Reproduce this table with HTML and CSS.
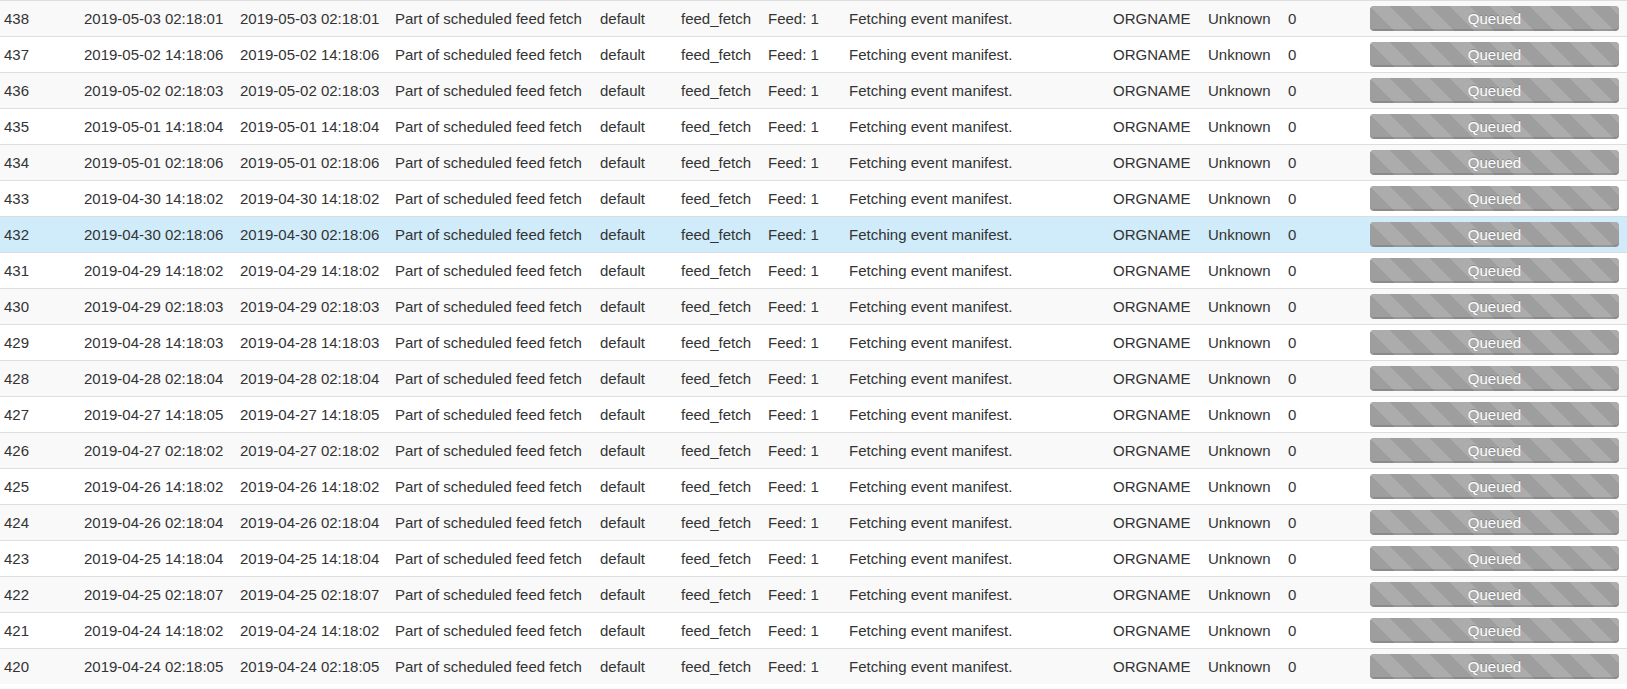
FILE: index.html
```html
<!DOCTYPE html>
<html>
<head>
<meta charset="utf-8">
<link rel="stylesheet" href="styles.css">
</head>
<body>
<table class="jobs">
<colgroup>
<col class="c-id"><col class="c-date"><col class="c-date2"><col class="c-desc"><col class="c-queue"><col class="c-type"><col class="c-input"><col class="c-msg"><col class="c-org"><col class="c-status"><col class="c-retry"><col class="c-progress">
</colgroup>
<tbody id="rows">
<tr><td>438</td><td>2019-05-03 02:18:01</td><td>2019-05-03 02:18:01</td><td>Part of scheduled feed fetch</td><td>default</td><td>feed_fetch</td><td>Feed: 1</td><td>Fetching event manifest.</td><td>ORGNAME</td><td>Unknown</td><td>0</td><td class="bar-cell"><div class="progress"><div class="bar">Queued</div></div></td></tr>
<tr><td>437</td><td>2019-05-02 14:18:06</td><td>2019-05-02 14:18:06</td><td>Part of scheduled feed fetch</td><td>default</td><td>feed_fetch</td><td>Feed: 1</td><td>Fetching event manifest.</td><td>ORGNAME</td><td>Unknown</td><td>0</td><td class="bar-cell"><div class="progress"><div class="bar">Queued</div></div></td></tr>
<tr><td>436</td><td>2019-05-02 02:18:03</td><td>2019-05-02 02:18:03</td><td>Part of scheduled feed fetch</td><td>default</td><td>feed_fetch</td><td>Feed: 1</td><td>Fetching event manifest.</td><td>ORGNAME</td><td>Unknown</td><td>0</td><td class="bar-cell"><div class="progress"><div class="bar">Queued</div></div></td></tr>
<tr><td>435</td><td>2019-05-01 14:18:04</td><td>2019-05-01 14:18:04</td><td>Part of scheduled feed fetch</td><td>default</td><td>feed_fetch</td><td>Feed: 1</td><td>Fetching event manifest.</td><td>ORGNAME</td><td>Unknown</td><td>0</td><td class="bar-cell"><div class="progress"><div class="bar">Queued</div></div></td></tr>
<tr><td>434</td><td>2019-05-01 02:18:06</td><td>2019-05-01 02:18:06</td><td>Part of scheduled feed fetch</td><td>default</td><td>feed_fetch</td><td>Feed: 1</td><td>Fetching event manifest.</td><td>ORGNAME</td><td>Unknown</td><td>0</td><td class="bar-cell"><div class="progress"><div class="bar">Queued</div></div></td></tr>
<tr><td>433</td><td>2019-04-30 14:18:02</td><td>2019-04-30 14:18:02</td><td>Part of scheduled feed fetch</td><td>default</td><td>feed_fetch</td><td>Feed: 1</td><td>Fetching event manifest.</td><td>ORGNAME</td><td>Unknown</td><td>0</td><td class="bar-cell"><div class="progress"><div class="bar">Queued</div></div></td></tr>
<tr class="selected"><td>432</td><td>2019-04-30 02:18:06</td><td>2019-04-30 02:18:06</td><td>Part of scheduled feed fetch</td><td>default</td><td>feed_fetch</td><td>Feed: 1</td><td>Fetching event manifest.</td><td>ORGNAME</td><td>Unknown</td><td>0</td><td class="bar-cell"><div class="progress"><div class="bar">Queued</div></div></td></tr>
<tr><td>431</td><td>2019-04-29 14:18:02</td><td>2019-04-29 14:18:02</td><td>Part of scheduled feed fetch</td><td>default</td><td>feed_fetch</td><td>Feed: 1</td><td>Fetching event manifest.</td><td>ORGNAME</td><td>Unknown</td><td>0</td><td class="bar-cell"><div class="progress"><div class="bar">Queued</div></div></td></tr>
<tr><td>430</td><td>2019-04-29 02:18:03</td><td>2019-04-29 02:18:03</td><td>Part of scheduled feed fetch</td><td>default</td><td>feed_fetch</td><td>Feed: 1</td><td>Fetching event manifest.</td><td>ORGNAME</td><td>Unknown</td><td>0</td><td class="bar-cell"><div class="progress"><div class="bar">Queued</div></div></td></tr>
<tr><td>429</td><td>2019-04-28 14:18:03</td><td>2019-04-28 14:18:03</td><td>Part of scheduled feed fetch</td><td>default</td><td>feed_fetch</td><td>Feed: 1</td><td>Fetching event manifest.</td><td>ORGNAME</td><td>Unknown</td><td>0</td><td class="bar-cell"><div class="progress"><div class="bar">Queued</div></div></td></tr>
<tr><td>428</td><td>2019-04-28 02:18:04</td><td>2019-04-28 02:18:04</td><td>Part of scheduled feed fetch</td><td>default</td><td>feed_fetch</td><td>Feed: 1</td><td>Fetching event manifest.</td><td>ORGNAME</td><td>Unknown</td><td>0</td><td class="bar-cell"><div class="progress"><div class="bar">Queued</div></div></td></tr>
<tr><td>427</td><td>2019-04-27 14:18:05</td><td>2019-04-27 14:18:05</td><td>Part of scheduled feed fetch</td><td>default</td><td>feed_fetch</td><td>Feed: 1</td><td>Fetching event manifest.</td><td>ORGNAME</td><td>Unknown</td><td>0</td><td class="bar-cell"><div class="progress"><div class="bar">Queued</div></div></td></tr>
<tr><td>426</td><td>2019-04-27 02:18:02</td><td>2019-04-27 02:18:02</td><td>Part of scheduled feed fetch</td><td>default</td><td>feed_fetch</td><td>Feed: 1</td><td>Fetching event manifest.</td><td>ORGNAME</td><td>Unknown</td><td>0</td><td class="bar-cell"><div class="progress"><div class="bar">Queued</div></div></td></tr>
<tr><td>425</td><td>2019-04-26 14:18:02</td><td>2019-04-26 14:18:02</td><td>Part of scheduled feed fetch</td><td>default</td><td>feed_fetch</td><td>Feed: 1</td><td>Fetching event manifest.</td><td>ORGNAME</td><td>Unknown</td><td>0</td><td class="bar-cell"><div class="progress"><div class="bar">Queued</div></div></td></tr>
<tr><td>424</td><td>2019-04-26 02:18:04</td><td>2019-04-26 02:18:04</td><td>Part of scheduled feed fetch</td><td>default</td><td>feed_fetch</td><td>Feed: 1</td><td>Fetching event manifest.</td><td>ORGNAME</td><td>Unknown</td><td>0</td><td class="bar-cell"><div class="progress"><div class="bar">Queued</div></div></td></tr>
<tr><td>423</td><td>2019-04-25 14:18:04</td><td>2019-04-25 14:18:04</td><td>Part of scheduled feed fetch</td><td>default</td><td>feed_fetch</td><td>Feed: 1</td><td>Fetching event manifest.</td><td>ORGNAME</td><td>Unknown</td><td>0</td><td class="bar-cell"><div class="progress"><div class="bar">Queued</div></div></td></tr>
<tr><td>422</td><td>2019-04-25 02:18:07</td><td>2019-04-25 02:18:07</td><td>Part of scheduled feed fetch</td><td>default</td><td>feed_fetch</td><td>Feed: 1</td><td>Fetching event manifest.</td><td>ORGNAME</td><td>Unknown</td><td>0</td><td class="bar-cell"><div class="progress"><div class="bar">Queued</div></div></td></tr>
<tr><td>421</td><td>2019-04-24 14:18:02</td><td>2019-04-24 14:18:02</td><td>Part of scheduled feed fetch</td><td>default</td><td>feed_fetch</td><td>Feed: 1</td><td>Fetching event manifest.</td><td>ORGNAME</td><td>Unknown</td><td>0</td><td class="bar-cell"><div class="progress"><div class="bar">Queued</div></div></td></tr>
<tr><td>420</td><td>2019-04-24 02:18:05</td><td>2019-04-24 02:18:05</td><td>Part of scheduled feed fetch</td><td>default</td><td>feed_fetch</td><td>Feed: 1</td><td>Fetching event manifest.</td><td>ORGNAME</td><td>Unknown</td><td>0</td><td class="bar-cell"><div class="progress"><div class="bar">Queued</div></div></td></tr>
</tbody>
</table>
</body>
</html>
```

FILE: styles.css
```css
html, body {
  margin: 0;
  padding: 0;
  background: #ffffff;
}

body {
  font-family: "Liberation Sans", Arial, sans-serif;
  font-size: 15px;
  color: #333333;
  overflow: hidden;
}

.jobs {
  width: 1627px;
  table-layout: fixed;
  border-collapse: collapse;
  border-spacing: 0;
}

.c-id { width: 76px; }
.c-date { width: 156px; }
.c-date2 { width: 155px; }
.c-desc { width: 205px; }
.c-queue { width: 81px; }
.c-type { width: 87px; }
.c-input { width: 81px; }
.c-msg { width: 264px; }
.c-org { width: 95px; }
.c-status { width: 80px; }
.c-retry { width: 82px; }
.c-progress { width: 265px; }

.jobs td {
  border-top: 1px solid #dddddd;
  padding: 8px 8px 7px 8px;
  line-height: 20px;
  height: 20px;
  vertical-align: middle;
  white-space: nowrap;
  overflow: hidden;
  text-align: left;
}

.jobs td:first-child {
  padding-left: 4px;
}

.jobs tr:nth-child(odd) td {
  background: #f9f9f9;
}

.jobs tr.selected td {
  background: #d0ecfa;
}

.jobs td.bar-cell {
  padding: 5px 8px 5px 8px;
}

.progress {
  height: 25px;
  border-radius: 4px;
  overflow: hidden;
  background: #9e9e9e;
}

.bar {
  height: 25px;
  line-height: 25px;
  text-align: center;
  color: #ffffff;
  font-size: 15px;
  text-shadow: 0 -1px 0 rgba(0, 0, 0, 0.2);
  background-color: #9e9e9e;
  background-image: linear-gradient(45deg,
    rgba(255, 255, 255, 0.15) 25%, transparent 25%, transparent 50%,
    rgba(255, 255, 255, 0.15) 50%, rgba(255, 255, 255, 0.15) 75%,
    transparent 75%, transparent);
  background-size: 40px 40px;
  box-shadow: inset 0 -2px 0 rgba(0, 0, 0, 0.12);
  border-radius: 4px;
}
```
